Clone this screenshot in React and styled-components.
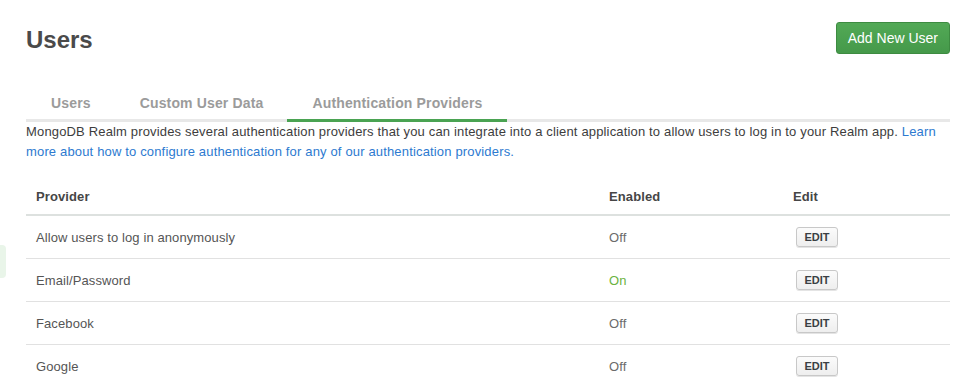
import React from "react";
import styled, { createGlobalStyle } from "styled-components";

const providers = [
  { id: "anon", name: "Allow users to log in anonymously", enabled: false },
  { id: "local-userpass", name: "Email/Password", enabled: true },
  { id: "oauth2-facebook", name: "Facebook", enabled: false },
  { id: "oauth2-google", name: "Google", enabled: false }
];

const tabs = ["Users", "Custom User Data", "Authentication Providers"];

const App = () => {
  return (
    <Page>
      <GlobalStyle />
      <Sidebar>
        <NavMarker />
      </Sidebar>
      <Main>
        <Header>
          <Title>Users</Title>
          <AddButton>Add New User</AddButton>
        </Header>
        <TabBar>
          {tabs.map(tab => (
            <Tab key={tab} active={tab === "Authentication Providers"}>
              {tab}
            </Tab>
          ))}
        </TabBar>
        <Description>
          MongoDB Realm provides several authentication providers that you can
          integrate into a client application to allow users to log in to your
          Realm app. <Link href="#">Learn more about how to configure
          authentication for any of our authentication providers.</Link>
        </Description>
        <Table>
          <thead>
            <tr>
              <Th>Provider</Th>
              <Th>Enabled</Th>
              <Th>Edit</Th>
            </tr>
          </thead>
          <tbody>
            {providers.map(p => (
              <Row key={p.id}>
                <Td>{p.name}</Td>
                <Td>
                  <Status on={p.enabled}>{p.enabled ? "On" : "Off"}</Status>
                </Td>
                <Td>
                  <EditButton>EDIT</EditButton>
                </Td>
              </Row>
            ))}
          </tbody>
        </Table>
      </Main>
    </Page>
  );
};

const GlobalStyle = createGlobalStyle`
  html, body {
    margin: 0;
    padding: 0;
    background: #fff;
    font-family: "Liberation Sans", Arial, sans-serif;
    overflow: hidden;
  }
`;

const Page = styled.div`
  display: flex;
  width: 963px;
  height: 380px;
`;

const Sidebar = styled.div`
  width: 6px;
  padding-top: 245px;
  flex-shrink: 0;
`;

const NavMarker = styled.div`
  height: 33px;
  background: #e9f5e9;
  border-radius: 0 4px 4px 0;
`;

const Main = styled.div`
  flex: 1;
  padding: 0 13px 0 20px;
`;

const Header = styled.div`
  display: flex;
  justify-content: space-between;
  align-items: flex-start;
  height: 88px;
`;

const Title = styled.h1`
  margin: 26px 0 0;
  font-size: 24px;
  line-height: 28px;
  font-weight: bold;
  color: #4a4a4a;
`;

const AddButton = styled.button`
  margin-top: 22px;
  height: 32px;
  padding: 0 11px;
  border: 1px solid #3d8b41;
  border-radius: 3px;
  background: linear-gradient(#52a956, #45994a);
  color: #fff;
  font-family: inherit;
  font-size: 14px;
`;

const TabBar = styled.div`
  display: flex;
  border-bottom: 3px solid #e8e8e8;
`;

const Tab = styled.div`
  padding: 6px 24px 7px 25px;
  margin-bottom: -3px;
  font-size: 14px;
  line-height: 18px;
  letter-spacing: 0.15px;
  font-weight: bold;
  color: #9b9b9b;
  border-bottom: 3px solid ${p => (p.active ? "#4aa352" : "transparent")};
`;

const Description = styled.p`
  margin: 0 0 16px;
  font-size: 13px;
  line-height: 20px;
  letter-spacing: 0.16px;
  color: #3d3d3d;
`;

const Link = styled.a`
  color: #2d7ad0;
  text-decoration: none;
`;

const Table = styled.table`
  width: 100%;
  border-collapse: collapse;
  font-size: 13px;
  letter-spacing: 0.1px;
  color: #464646;
`;

const Th = styled.th`
  text-align: left;
  font-weight: bold;
  height: 36px;
  padding: 0 10px;
  border-bottom: 2px solid #dde1df;
  &:nth-child(1) {
    width: 553px;
  }
  &:nth-child(2) {
    width: 164px;
  }
`;

const Row = styled.tr`
  & + & td {
    border-top: 1px solid #e1e1e1;
  }
`;

const Td = styled.td`
  height: 42px;
  padding: 0 10px;
  color: #555;
`;

const Status = styled.span`
  color: ${p => (p.on ? "#6bb33f" : "#6b6b6b")};
`;

const EditButton = styled.button`
  margin-left: 3px;
  height: 20px;
  width: 42px;
  padding: 0;
  border: 1px solid #c8c8c8;
  border-radius: 3px;
  background: linear-gradient(#fbfbfb, #eeeeee);
  box-shadow: 0 1px 0 #e4e4e4;
  font-family: inherit;
  font-size: 11px;
  font-weight: bold;
  letter-spacing: 0;
  color: #3a3f44;
`;

export default App;
